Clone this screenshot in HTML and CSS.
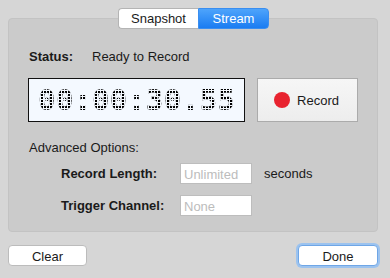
FILE: index.html
```html
<!DOCTYPE HTML>
<html>
<head>
    <meta charset="utf-8">
    <title>Stream</title>
    <link rel="stylesheet" href="styles.css">
</head>
<body>
    <div class="window">
        <div class="tabs">
            <span class="tab">Snapshot</span>
            <span class="tab on">Stream</span>
        </div>

        <div class="group">
            <div class="status">
                <span class="status-label">Status:</span>
                <span class="status-value">Ready to Record</span>
            </div>

            <div class="record-row">
                <div class="lcd"><span class="lcd-text">00:00:30.55</span></div>
                <div class="rec-btn">
                    <span class="rec-dot"></span>
                    <span>Record</span>
                </div>
            </div>

            <div class="adv-title">Advanced Options:</div>

            <div class="options">
                <span class="opt-label">Record Length:</span>
                <span class="field">Unlimited</span>
                <span class="unit">seconds</span>

                <span class="opt-label">Trigger Channel:</span>
                <span class="field">None</span>
                <span></span>
            </div>
        </div>

        <div class="footer">
            <span class="btn">Clear</span>
            <span class="btn default">Done</span>
        </div>
    </div>
</body>
</html>
```

FILE: styles.css
```css
html, body {
    margin: 0;
    padding: 0;
    background: #d6d6d6;
    height: 100%;
}

.window {
    width: 390px;
    height: 278px;
    padding-top: 8px;
    box-sizing: border-box;
    font-family: "Liberation Sans", Arial, sans-serif;
    font-size: 13px;
    color: #1a1a1a;
}

/*segmented control*/
.tabs {
    display: flex;
    justify-content: center;
    position: relative;
    z-index: 1;
    margin-bottom: -11px;
    padding-right: 3px;
}
.tab {
    height: 19px;
    line-height: 19px;
    width: 79px;
    text-align: center;
    background: #ffffff;
    border: 1px solid #b4b4b4;
    border-right: 0;
    border-radius: 4px 0 0 4px;
}
.tab.on {
    width: 69px;
    color: #ffffff;
    background: linear-gradient(#4ea4fb, #1a7cf2);
    border: 1px solid #3a8ef0;
    border-radius: 0 4px 4px 0;
}

/*group box*/
.group {
    margin: 0 12px 0 8px;
    height: 214px;
    box-sizing: border-box;
    padding: 30px 0 0 19px;
    background: #cbcbcb;
    border: 1px solid #c3c3c3;
    border-radius: 4px;
}

.status {
    display: flex;
    height: 16px;
    line-height: 16px;
    padding-left: 1px;
}
.status-label {
    font-weight: bold;
    width: 63px;
}

.record-row {
    display: flex;
    gap: 12px;
    margin-top: 13px;
    height: 44px;
}
.lcd {
    width: 217px;
    box-sizing: border-box;
    border: 1px solid #111111;
    background: #f4f9ff;
    display: flex;
    align-items: center;
    padding-left: 9px;
}
.lcd-text {
    font-family: "DejaVu Sans Mono", monospace;
    font-weight: bold;
    font-size: 29px;
    letter-spacing: 0.5px;
    line-height: 30px;
    color: transparent;
    background:
        linear-gradient(90deg, transparent 2px, #f4f9ff 2px) 0 0 / 3px 3px,
        linear-gradient(transparent 2px, #f4f9ff 2px) 0 0 / 3px 3px,
        #000000;
    -webkit-background-clip: text;
    background-clip: text;
}
.rec-btn {
    width: 101px;
    box-sizing: border-box;
    border: 1px solid #ababab;
    background: linear-gradient(#f6f6f6, #ededed);
    display: flex;
    align-items: center;
    justify-content: center;
    gap: 7px;
    padding-right: 2px;
}
.rec-dot {
    width: 16px;
    height: 16px;
    border-radius: 50%;
    background: #e8232f;
}

.adv-title {
    margin-top: 18px;
    height: 16px;
    line-height: 16px;
    padding-left: 1px;
}

.options {
    display: grid;
    grid-template-columns: 119px 72px auto;
    row-gap: 11px;
    margin: 7px 0 0 33px;
    align-items: center;
}
.opt-label {
    font-weight: bold;
}
.field {
    height: 21px;
    line-height: 21px;
    box-sizing: border-box;
    border: 1px solid #bdbdbd;
    background: #ffffff;
    color: #bcbcbc;
    padding-left: 3px;
}
.unit {
    margin-left: 12px;
}

/*bottom buttons*/
.footer {
    display: flex;
    justify-content: space-between;
    margin: 13px 12px 0 8px;
}
.btn {
    width: 79px;
    height: 21px;
    line-height: 21px;
    box-sizing: border-box;
    text-align: center;
    background: #ffffff;
    border: 1px solid #bcbcbc;
    border-radius: 4px;
}
.btn.default {
    width: 80px;
    border-color: #6fa6e6;
    box-shadow: 0 0 0 2px #9cc3ef;
}
```
